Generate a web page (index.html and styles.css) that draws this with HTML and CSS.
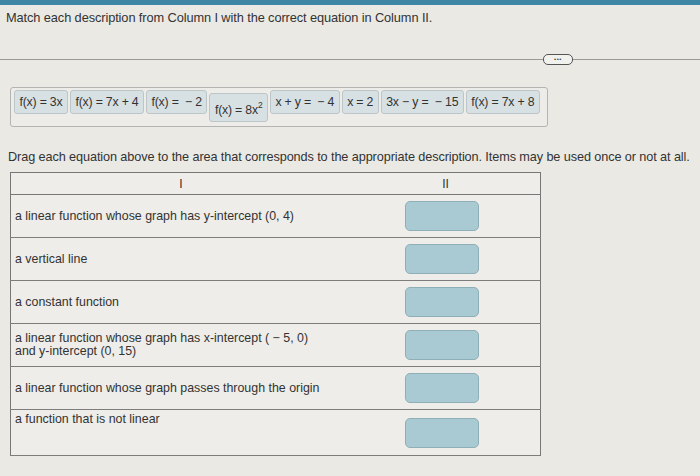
FILE: index.html
```html
<!DOCTYPE html>
<html>
<head>
<meta charset="utf-8">
<link rel="stylesheet" href="styles.css">
</head>
<body>
<div class="topbar"></div>
<p class="title">Match each description from Column I with the correct equation in Column II.</p>
<div class="divider"><span class="pill">&bull;&bull;&bull;</span></div>
<div class="bank">
  <span class="chip">f(x) = 3x</span>
  <span class="chip">f(x) = 7x + 4</span>
  <span class="chip">f(x) =&nbsp; &minus; 2</span>
  <span class="chip chip-tall">f(x) = 8x<sup>2</sup></span>
  <span class="chip">x + y =&nbsp; &minus; 4</span>
  <span class="chip">x = 2</span>
  <span class="chip">3x &minus; y =&nbsp; &minus; 15</span>
  <span class="chip">f(x) = 7x + 8</span>
</div>
<p class="instr">Drag each equation above to the area that corresponds to the appropriate description. Items may be used once or not at all.</p>
<table class="match">
  <tr class="head"><th class="c1">I</th><th class="c2">II</th></tr>
  <tr><td class="c1">a linear function whose graph has y-intercept (0, 4)</td><td class="c2"><div class="drop"></div></td></tr>
  <tr><td class="c1">a vertical line</td><td class="c2"><div class="drop"></div></td></tr>
  <tr><td class="c1">a constant function</td><td class="c2"><div class="drop"></div></td></tr>
  <tr><td class="c1">a linear function whose graph has x-intercept ( &minus; 5, 0)<br>and y-intercept (0, 15)</td><td class="c2"><div class="drop"></div></td></tr>
  <tr><td class="c1">a linear function whose graph passes through the origin</td><td class="c2"><div class="drop"></div></td></tr>
  <tr><td class="c1 top">a function that is not linear</td><td class="c2"><div class="drop"></div></td></tr>
</table>
</body>
</html>
```
FILE: styles.css
```css
html, body {
  margin: 0;
  padding: 0;
}
body {
  width: 700px;
  height: 476px;
  overflow: hidden;
  background: #eae9e4;
  font-family: "Liberation Sans", Arial, sans-serif;
  color: #333;
}
.topbar {
  height: 5px;
  background: #3e86a4;
}
.title {
  margin: 5px 0 0 6px;
  font-size: 12.8px;
  line-height: 16px;
  letter-spacing: -0.1px;
}
.divider {
  margin-top: 33px;
  height: 1px;
  background: #9a9a98;
  display: flex;
  justify-content: flex-end;
  align-items: center;
  padding-right: 127px;
}
.pill {
  width: 28px;
  height: 9px;
  border: 1px solid #555;
  border-radius: 5px;
  background: #f1f1ee;
  font-size: 6px;
  line-height: 9px;
  text-align: center;
  letter-spacing: 0.5px;
  color: #444;
}
.bank {
  margin: 27px 0 0 10px;
  width: 530px;
  height: 34px;
  padding: 2px 3px;
  border: 1px solid #b4b4b2;
  border-radius: 3px;
  background: #edece8;
  display: flex;
  align-items: flex-start;
  gap: 2px;
}
.chip {
  height: 24px;
  box-sizing: border-box;
  padding: 0 4.5px;
  border: 1px solid #bcc6c8;
  border-radius: 3px;
  background: #d7e0e2;
  font-size: 12.3px;
  line-height: 22px;
  color: #333;
  white-space: nowrap;
  letter-spacing: -0.2px;
}
.chip-tall {
  height: 29px;
  margin-top: 3px;
  line-height: 32px;
}
.chip sup {
  font-size: 8.5px;
  line-height: 0;
  vertical-align: 6px;
}
.instr {
  margin: 22px 0 0 8px;
  font-size: 12.7px;
  line-height: 16px;
  letter-spacing: -0.1px;
}
.match {
  margin: 7px 0 0 10px;
  width: 531px;
  border-collapse: collapse;
  border: 1px solid #777;
  background: #eeede9;
  font-size: 12.4px;
}
.match th {
  height: 21px;
  padding: 0;
  font-weight: normal;
  font-size: 12px;
  text-align: center;
  border-bottom: 1px solid #777;
}
.match td {
  height: 42px;
  padding: 0 4px;
  border-bottom: 1px solid #7d7d7b;
  vertical-align: middle;
  line-height: 13px;
}
.match .c1 {
  width: 332px;
}
.match td.top {
  vertical-align: top;
  padding-top: 3px;
}
.match td.c2 {
  padding: 0;
}
.drop {
  width: 72px;
  height: 28px;
  margin-left: 54px;
  border: 1px solid #8eafb7;
  border-radius: 5px;
  background: #a9cad2;
}
```
